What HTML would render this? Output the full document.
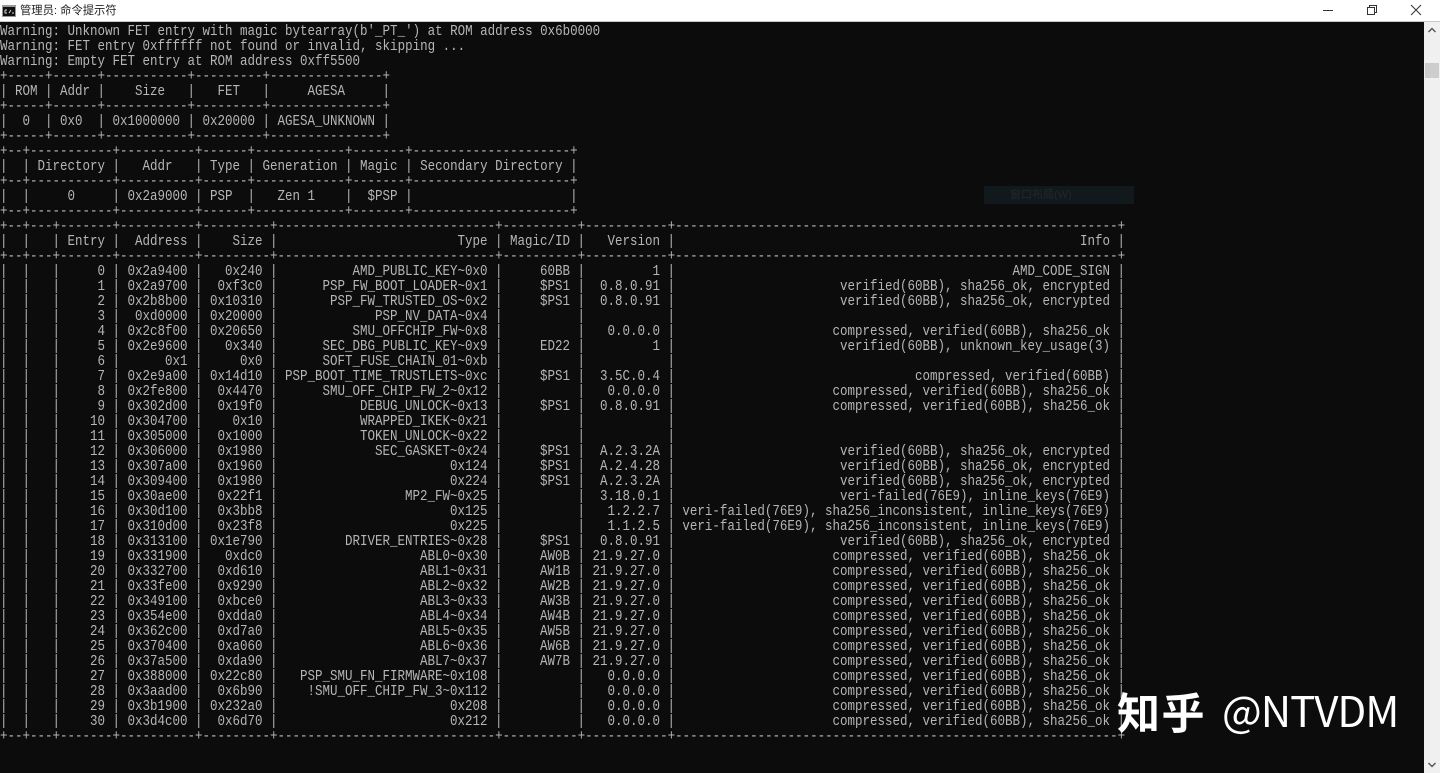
<!DOCTYPE html>
<html lang="zh"><head><meta charset="utf-8"><title>管理员: 命令提示符</title>
<style>
html,body{margin:0;padding:0;width:1440px;height:773px;overflow:hidden;background:#0c0c0c}
#bar{position:absolute;left:0;top:0;width:1440px;height:21px;background:#fff;border-bottom:1px solid #c8c8c8}
#ttl{position:absolute;left:20px;top:3px;font:11.3px/16px "Liberation Sans","Noto Sans CJK SC",sans-serif;color:#222;white-space:pre}
#sb{position:absolute;left:1424px;top:22px;width:16px;height:751px;background:#f0f0f0}
#th{position:absolute;left:1425px;top:63px;width:14px;height:15px;background:#cdcdcd}
#con{position:absolute;left:0;top:23.5px;width:1728px;transform:scaleX(.83333);transform-origin:0 0;font:15px/15px "Liberation Mono",monospace;color:#b6b6b6;filter:blur(.25px)}
#con pre{margin:0;font:inherit;height:15px;white-space:pre}
table{border-collapse:collapse;table-layout:fixed;width:1350px}
td{padding:0;height:15px;text-align:right;white-space:pre;line-height:15px}
td:first-child{text-align:left}
#gh{position:absolute;left:984px;top:186px;width:150px;height:18px;background:#11191d;font:11px/18px "Liberation Sans","Noto Sans CJK SC",sans-serif;color:#23282b;text-indent:26px}
#wm{position:absolute;left:1117px;top:683px;font:43px/56px "Liberation Sans","Noto Sans CJK SC",sans-serif;color:#fff;white-space:pre}
#wm b{font-weight:700;font-family:"Noto Sans CJK SC",sans-serif;letter-spacing:1.5px}
#wm span{position:absolute;left:105px;top:-1px;font:400 42px/56px "Noto Sans CJK SC",sans-serif;letter-spacing:-1px}
</style></head><body>
<div id="bar">
<svg style="position:absolute;left:2px;top:5px" width="14" height="12" viewBox="0 0 14 12"><rect width="14" height="12" fill="#9a9a9a"/><rect x="1" y="2" width="12" height="9" fill="#111"/><path d="M3 5h2M3 5v3h2M7 8l2-3M10 8h2" stroke="#ddd" fill="none"/></svg>
<div id="ttl">管理员: 命令提示符</div>
<svg style="position:absolute;left:1320px;top:2px" width="110" height="16" viewBox="0 0 110 16" fill="none" stroke="#333" stroke-width="1"><path d="M3 8.5h10"/><path d="M47.5 5.5h7v7h-7zM49.5 5.5v-2h7v7h-2"/><path d="M91 3l10 10M101 3L91 13"/></svg>
</div>
<div id="sb"></div><div id="th"></div>
<svg style="position:absolute;left:1424px;top:22px" width="16" height="751" viewBox="0 0 16 751" fill="none" stroke="#555" stroke-width="1.4"><path d="M4.5 10l3.5-3.5 3.5 3.5"/><path d="M4.5 741l3.5 3.5 3.5-3.5"/></svg>
<div id="gh">窗口布局(W)</div>
<div id="con">
<pre>Warning: Unknown FET entry with magic bytearray(b'_PT_') at ROM address 0x6b0000</pre>
<pre>Warning: FET entry 0xffffff not found or invalid, skipping ...</pre>
<pre>Warning: Empty FET entry at ROM address 0xff5500</pre>
<pre>+-----+------+-----------+---------+---------------+</pre>
<pre>| ROM | Addr |    Size   |   FET   |     AGESA     |</pre>
<pre>+-----+------+-----------+---------+---------------+</pre>
<pre>|  0  | 0x0  | 0x1000000 | 0x20000 | AGESA_UNKNOWN |</pre>
<pre>+-----+------+-----------+---------+---------------+</pre>
<pre>+--+-----------+----------+------+------------+-------+---------------------+</pre>
<pre>|  | Directory |   Addr   | Type | Generation | Magic | Secondary Directory |</pre>
<pre>+--+-----------+----------+------+------------+-------+---------------------+</pre>
<pre>|  |     0     | 0x2a9000 | PSP  |   Zen 1    |  $PSP |                     |</pre>
<pre>+--+-----------+----------+------+------------+-------+---------------------+</pre>
<pre>+--+---+-------+----------+---------+-----------------------------+----------+-----------+-----------------------------------------------------------+</pre>
<table>
<colgroup><col style="width:72px"><col style="width:72px"><col style="width:99px"><col style="width:90px"><col style="width:270px"><col style="width:99px"><col style="width:108px"><col style="width:540px"></colgroup>
<tr><td>|  |   |<td>Entry |<td>Address |<td>Size |<td>Type |<td>Magic/ID |<td>Version |<td>Info |
</table>
<pre>+--+---+-------+----------+---------+-----------------------------+----------+-----------+-----------------------------------------------------------+</pre>
<table>
<colgroup><col style="width:72px"><col style="width:72px"><col style="width:99px"><col style="width:90px"><col style="width:270px"><col style="width:99px"><col style="width:108px"><col style="width:540px"></colgroup>
<tr><td>|  |   |<td>0 |<td>0x2a9400 |<td>0x240 |<td>AMD_PUBLIC_KEY~0x0 |<td>60BB |<td>1 |<td>AMD_CODE_SIGN |
<tr><td>|  |   |<td>1 |<td>0x2a9700 |<td>0xf3c0 |<td>PSP_FW_BOOT_LOADER~0x1 |<td>$PS1 |<td>0.8.0.91 |<td>verified(60BB), sha256_ok, encrypted |
<tr><td>|  |   |<td>2 |<td>0x2b8b00 |<td>0x10310 |<td>PSP_FW_TRUSTED_OS~0x2 |<td>$PS1 |<td>0.8.0.91 |<td>verified(60BB), sha256_ok, encrypted |
<tr><td>|  |   |<td>3 |<td>0xd0000 |<td>0x20000 |<td>PSP_NV_DATA~0x4 |<td>|<td>|<td>|
<tr><td>|  |   |<td>4 |<td>0x2c8f00 |<td>0x20650 |<td>SMU_OFFCHIP_FW~0x8 |<td>|<td>0.0.0.0 |<td>compressed, verified(60BB), sha256_ok |
<tr><td>|  |   |<td>5 |<td>0x2e9600 |<td>0x340 |<td>SEC_DBG_PUBLIC_KEY~0x9 |<td>ED22 |<td>1 |<td>verified(60BB), unknown_key_usage(3) |
<tr><td>|  |   |<td>6 |<td>0x1 |<td>0x0 |<td>SOFT_FUSE_CHAIN_01~0xb |<td>|<td>|<td>|
<tr><td>|  |   |<td>7 |<td>0x2e9a00 |<td>0x14d10 |<td>PSP_BOOT_TIME_TRUSTLETS~0xc |<td>$PS1 |<td>3.5C.0.4 |<td>compressed, verified(60BB) |
<tr><td>|  |   |<td>8 |<td>0x2fe800 |<td>0x4470 |<td>SMU_OFF_CHIP_FW_2~0x12 |<td>|<td>0.0.0.0 |<td>compressed, verified(60BB), sha256_ok |
<tr><td>|  |   |<td>9 |<td>0x302d00 |<td>0x19f0 |<td>DEBUG_UNLOCK~0x13 |<td>$PS1 |<td>0.8.0.91 |<td>compressed, verified(60BB), sha256_ok |
<tr><td>|  |   |<td>10 |<td>0x304700 |<td>0x10 |<td>WRAPPED_IKEK~0x21 |<td>|<td>|<td>|
<tr><td>|  |   |<td>11 |<td>0x305000 |<td>0x1000 |<td>TOKEN_UNLOCK~0x22 |<td>|<td>|<td>|
<tr><td>|  |   |<td>12 |<td>0x306000 |<td>0x1980 |<td>SEC_GASKET~0x24 |<td>$PS1 |<td>A.2.3.2A |<td>verified(60BB), sha256_ok, encrypted |
<tr><td>|  |   |<td>13 |<td>0x307a00 |<td>0x1960 |<td>0x124 |<td>$PS1 |<td>A.2.4.28 |<td>verified(60BB), sha256_ok, encrypted |
<tr><td>|  |   |<td>14 |<td>0x309400 |<td>0x1980 |<td>0x224 |<td>$PS1 |<td>A.2.3.2A |<td>verified(60BB), sha256_ok, encrypted |
<tr><td>|  |   |<td>15 |<td>0x30ae00 |<td>0x22f1 |<td>MP2_FW~0x25 |<td>|<td>3.18.0.1 |<td>veri-failed(76E9), inline_keys(76E9) |
<tr><td>|  |   |<td>16 |<td>0x30d100 |<td>0x3bb8 |<td>0x125 |<td>|<td>1.2.2.7 |<td>veri-failed(76E9), sha256_inconsistent, inline_keys(76E9) |
<tr><td>|  |   |<td>17 |<td>0x310d00 |<td>0x23f8 |<td>0x225 |<td>|<td>1.1.2.5 |<td>veri-failed(76E9), sha256_inconsistent, inline_keys(76E9) |
<tr><td>|  |   |<td>18 |<td>0x313100 |<td>0x1e790 |<td>DRIVER_ENTRIES~0x28 |<td>$PS1 |<td>0.8.0.91 |<td>verified(60BB), sha256_ok, encrypted |
<tr><td>|  |   |<td>19 |<td>0x331900 |<td>0xdc0 |<td>ABL0~0x30 |<td>AW0B |<td>21.9.27.0 |<td>compressed, verified(60BB), sha256_ok |
<tr><td>|  |   |<td>20 |<td>0x332700 |<td>0xd610 |<td>ABL1~0x31 |<td>AW1B |<td>21.9.27.0 |<td>compressed, verified(60BB), sha256_ok |
<tr><td>|  |   |<td>21 |<td>0x33fe00 |<td>0x9290 |<td>ABL2~0x32 |<td>AW2B |<td>21.9.27.0 |<td>compressed, verified(60BB), sha256_ok |
<tr><td>|  |   |<td>22 |<td>0x349100 |<td>0xbce0 |<td>ABL3~0x33 |<td>AW3B |<td>21.9.27.0 |<td>compressed, verified(60BB), sha256_ok |
<tr><td>|  |   |<td>23 |<td>0x354e00 |<td>0xdda0 |<td>ABL4~0x34 |<td>AW4B |<td>21.9.27.0 |<td>compressed, verified(60BB), sha256_ok |
<tr><td>|  |   |<td>24 |<td>0x362c00 |<td>0xd7a0 |<td>ABL5~0x35 |<td>AW5B |<td>21.9.27.0 |<td>compressed, verified(60BB), sha256_ok |
<tr><td>|  |   |<td>25 |<td>0x370400 |<td>0xa060 |<td>ABL6~0x36 |<td>AW6B |<td>21.9.27.0 |<td>compressed, verified(60BB), sha256_ok |
<tr><td>|  |   |<td>26 |<td>0x37a500 |<td>0xda90 |<td>ABL7~0x37 |<td>AW7B |<td>21.9.27.0 |<td>compressed, verified(60BB), sha256_ok |
<tr><td>|  |   |<td>27 |<td>0x388000 |<td>0x22c80 |<td>PSP_SMU_FN_FIRMWARE~0x108 |<td>|<td>0.0.0.0 |<td>compressed, verified(60BB), sha256_ok |
<tr><td>|  |   |<td>28 |<td>0x3aad00 |<td>0x6b90 |<td>!SMU_OFF_CHIP_FW_3~0x112 |<td>|<td>0.0.0.0 |<td>compressed, verified(60BB), sha256_ok |
<tr><td>|  |   |<td>29 |<td>0x3b1900 |<td>0x232a0 |<td>0x208 |<td>|<td>0.0.0.0 |<td>compressed, verified(60BB), sha256_ok |
<tr><td>|  |   |<td>30 |<td>0x3d4c00 |<td>0x6d70 |<td>0x212 |<td>|<td>0.0.0.0 |<td>compressed, verified(60BB), sha256_ok |
</table>
<pre>+--+---+-------+----------+---------+-----------------------------+----------+-----------+-----------------------------------------------------------+</pre>
</div>
<div id="wm"><b>知乎</b><span>@NTVDM</span></div>
</body></html>
